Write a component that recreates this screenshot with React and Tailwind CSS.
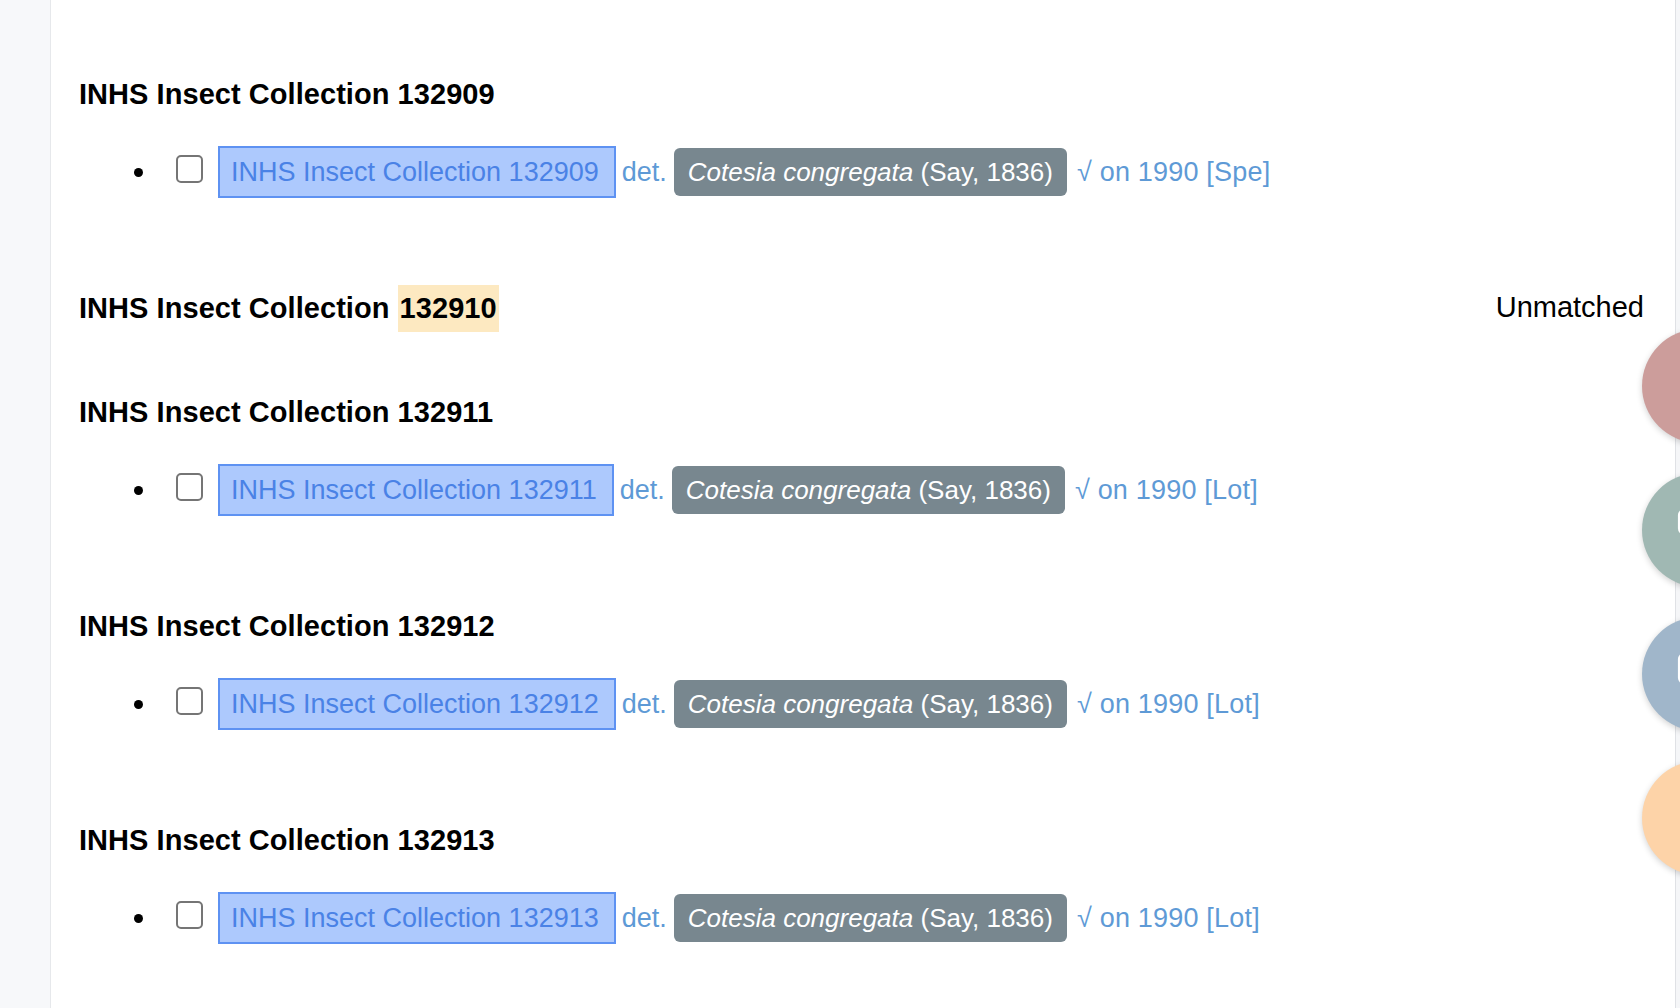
import { Undo2, Tag, Copy, Plus } from 'lucide-react'

const sections = [
  { id: '132909', rows: [{ tag: 'Spe' }] },
  { id: '132910', unmatched: true, rows: [] },
  { id: '132911', rows: [{ tag: 'Lot' }] },
  { id: '132912', rows: [{ tag: 'Lot' }] },
  { id: '132913', rows: [{ tag: 'Lot' }] },
]

const fabs = [
  { bg: 'bg-[#cc9d9b]', Icon: Undo2 },
  { bg: 'bg-[#a0b8b3]', Icon: Tag },
  { bg: 'bg-[#a0b6ca]', Icon: Copy },
  { bg: 'bg-[#fdd3a8]', Icon: Plus },
]

function Row({ id, tag }) {
  return (
    <li className="flex h-[52px] items-center text-[27px] leading-none">
      <span className="ml-[55px] h-[9px] w-[9px] shrink-0 rounded-full bg-black" />
      <span className="mb-[6px] ml-[33px] h-[28px] w-[27px] shrink-0 rounded-[5px] border-2 border-[#757575] bg-white" />
      <span className="ml-[15px] flex h-[52px] items-center border-2 border-[#5e92f2] bg-[#adc9fd] pl-[11px] pr-[15px] text-[#4a82e6]">
        INHS Insect Collection {id}
      </span>
      <span className="ml-[6px] text-[#5e9ad6]">det.</span>
      <span className="ml-[7px] flex h-[48px] items-center rounded-[6px] bg-[#78878f] px-[14px] text-[26px] text-white">
        <i>Cotesia congregata</i>&nbsp;(Say, 1836)
      </span>
      <span className="ml-[10px] tracking-[0.2px] text-[#5e9ad6]">√ on 1990 [{tag}]</span>
    </li>
  )
}

export default function App() {
  return (
    <div className="relative flex h-screen w-full overflow-hidden bg-white font-['Liberation_Sans',Arial,sans-serif] text-black">
      <div className="w-[51px] shrink-0 border-r border-[#e6e8eb] bg-[#f7f8fa]" />

      <main className="flex flex-1 flex-col gap-16 pl-7 pr-[31px] pt-[74px]">
        {sections.map((s) => (
          <section key={s.id}>
            <div className="flex h-[40px] items-center justify-between">
              <h2 className="text-[29px] font-bold leading-none tracking-[0.05px]">
                INHS Insect Collection{' '}
                {s.unmatched ? (
                  <span className="inline-block bg-[#fde9c1] px-[2px] leading-[47px]">{s.id}</span>
                ) : (
                  s.id
                )}
              </h2>
              {s.unmatched && <span className="text-[29px]">Unmatched</span>}
            </div>
            {s.rows.length > 0 && (
              <ul className="mb-[26px] mt-8">
                {s.rows.map((r, i) => (
                  <Row key={i} id={s.id} tag={r.tag} />
                ))}
              </ul>
            )}
          </section>
        ))}
      </main>

      <div className="w-[5px] shrink-0 border-l border-[#dfe1e5] bg-[#f5f6f8]" />

      {/* floating action buttons, mostly off the right edge */}
      <div className="absolute left-[1642px] top-[329px] flex flex-col gap-[30px]">
        {fabs.map(({ bg, Icon }, i) => (
          <div
            key={i}
            className={`flex h-[114px] w-[114px] items-center justify-center rounded-full shadow-[0_2px_6px_rgba(0,0,0,0.18)] ${bg}`}
          >
            <Icon size={44} strokeWidth={3} className="text-white" />
          </div>
        ))}
      </div>
    </div>
  )
}
